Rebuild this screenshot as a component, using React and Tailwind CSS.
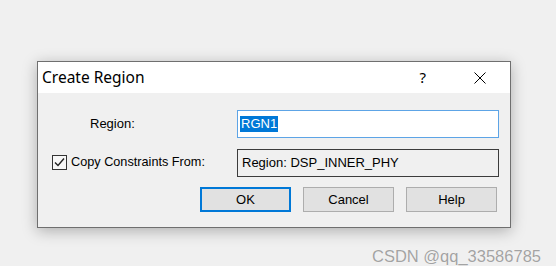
import React from 'react';

const body = { fontFamily: '"Liberation Sans", Arial, sans-serif' };
const title = { fontFamily: '"Noto Sans", "Open Sans", sans-serif' };

const Button = ({ label, primary }) => (
  <button
    type="button"
    className={`w-[91px] h-[25px] bg-[#e1e1e1] text-[13px] text-black flex items-center justify-center ${
      primary ? 'border-2 border-[#0078d7]' : 'border border-[#adadad]'
    }`}
    style={body}
  >
    {label}
  </button>
);

export default function App() {
  return (
    <div className="w-[556px] h-[266px] bg-[#f0f0f0] overflow-hidden">
      <div className="pt-[61px] pl-[37px]">
        {/* dialog */}
        <div className="w-[474px] h-[167px] border border-[#6f6f6f] bg-[#f0f0f0] shadow-[0_3px_14px_rgba(0,0,0,0.28)] flex flex-col">
          <div className="h-[31px] bg-white flex items-center pl-[4px]">
            <span className="text-[15.5px] text-black" style={title}>Create Region</span>
            <span className="ml-auto text-[15px] text-black leading-none" style={title}>?</span>
            <svg className="ml-[48px] mr-[24px]" width="12" height="12" viewBox="0 0 12 12">
              <path d="M0.5 0.5 L11.5 11.5 M11.5 0.5 L0.5 11.5" stroke="#000" strokeWidth="1" fill="none" />
            </svg>
          </div>

          <div className="flex flex-col pt-[17px]" style={body}>
            <div className="flex items-center h-[28px]">
              <div className="w-[199px] pl-[52px] text-[13px] text-black">Region:</div>
              <div className="w-[262px] h-[28px] bg-white border border-[#5da4e6] flex items-center pl-[2px]">
                <span className="bg-[#0078d7] text-white text-[13px] leading-[16px] px-[1px]">RGN1</span>
              </div>
            </div>

            <div className="flex items-center h-[28px] mt-[11px]">
              <div className="w-[199px] pl-[14px] flex items-center">
                <div className="w-[15px] h-[15px] border border-[#333] bg-[#f7f7f7] flex items-center justify-center">
                  <svg width="11" height="11" viewBox="0 0 11 11">
                    <path d="M1 5.5 L4 8.5 L10 1.5" stroke="#222" strokeWidth="1.4" fill="none" />
                  </svg>
                </div>
                <span className="ml-[4px] text-[12.7px] text-black">Copy Constraints From:</span>
              </div>
              <div className="w-[262px] h-[28px] bg-[#f0f0f0] border border-[#3c3c3c] flex items-center pl-[4px] text-[13px] text-black">
                Region: DSP_INNER_PHY
              </div>
            </div>

            <div className="flex justify-end gap-3 pr-[13px] mt-[10px]">
              <Button label="OK" primary />
              <Button label="Cancel" />
              <Button label="Help" />
            </div>
          </div>
        </div>
      </div>

      <div className="flex justify-end pr-[15px] mt-[19px]">
        <span
          className="text-[16.5px] leading-[18px] text-[#a3a3a3]"
          style={{ ...body, textShadow: '0 0 1px #fff' }}
        >
          CSDN @qq_33586785
        </span>
      </div>
    </div>
  );
}
